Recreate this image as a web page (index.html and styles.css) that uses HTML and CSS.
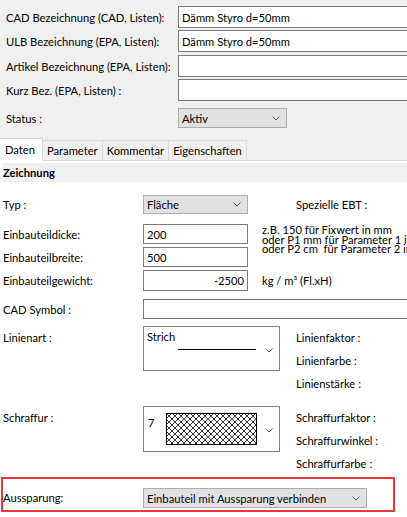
FILE: index.html
```html
<!DOCTYPE html>
<html lang="de">
<head>
<meta charset="utf-8">
<title>Einbauteil</title>
<link rel="stylesheet" href="styles.css">
</head>
<body>
<div class="page">
  <section class="head">
    <div class="hrow"><label>CAD Bezeichnung (CAD, Listen):</label><div class="field">Dämm Styro d=50mm</div></div>
    <div class="hrow"><label>ULB Bezeichnung (EPA, Listen):</label><div class="field">Dämm Styro d=50mm</div></div>
    <div class="hrow gap1"><label>Artikel Bezeichnung (EPA, Listen):</label><div class="field"></div></div>
    <div class="hrow"><label>Kurz Bez. (EPA, Listen) :</label><div class="field"></div></div>
    <div class="hrow status"><label>Status :</label><div class="combo status-combo"><span>Aktiv</span><svg class="chev" width="8" height="5" viewBox="0 0 8 5"><polyline points="0.5,0.5 4,4 7.5,0.5"/></svg></div></div>
  </section>

  <nav class="tabs">
    <div class="tab active">Daten</div>
    <div class="tab">Parameter</div>
    <div class="tab">Kommentar</div>
    <div class="tab">Eigenschaften</div>
  </nav>

  <section class="panel">
    <div class="band">Zeichnung</div>
    <div class="lower">
      <div class="row r-typ">
        <label>Typ :</label>
        <div class="combo"><span>Fläche</span><svg class="chev" width="8" height="5" viewBox="0 0 8 5"><polyline points="0.5,0.5 4,4 7.5,0.5"/></svg></div>
        <span class="right">Spezielle EBT :</span>
      </div>
      <div class="row pair">
        <label class="p-l1">Einbauteildicke:</label>
        <div class="field p-f1">200</div>
        <div class="note">z.B. 150 für Fixwert in mm
oder P1 mm für Parameter 1 in mm
oder P2 cm  für Parameter 2 in cm</div>
        <label class="p-l2">Einbauteilbreite:</label>
        <div class="field p-f2">500</div>
      </div>
      <div class="row r-gew">
        <label>Einbauteilgewicht:</label>
        <div class="field num">-2500</div>
        <span class="unit">kg / m³ (Fl.xH)</span>
      </div>
      <div class="row r-cad">
        <label>CAD Symbol :</label>
        <div class="field wide"></div>
      </div>
      <div class="row r-big r-lin">
        <label>Linienart :</label>
        <div class="bigbox">
          <span class="boxlabel">Strich</span>
          <span class="stroke"></span>
          <svg class="chev" width="8" height="5" viewBox="0 0 8 5"><polyline points="0.5,0.5 4,4 7.5,0.5"/></svg>
        </div>
        <div class="props">
          <span>Linienfaktor :</span>
          <span>Linienfarbe :</span>
          <span>Linienstärke :</span>
        </div>
      </div>
      <div class="row r-big r-sch">
        <label>Schraffur :</label>
        <div class="bigbox hatchbox">
          <span class="boxlabel">7</span>
          <svg class="hatch" width="91" height="32" viewBox="0 0 91 32">
            <defs>
              <pattern id="xh" width="6" height="6" patternUnits="userSpaceOnUse">
                <path d="M0,0 L6,6 M6,0 L0,6" stroke="#000" stroke-width="0.8" fill="none"/>
              </pattern>
            </defs>
            <rect x="0.5" y="0.5" width="90" height="31" fill="url(#xh)" stroke="#000" stroke-width="1"/>
          </svg>
          <svg class="chev" width="8" height="5" viewBox="0 0 8 5"><polyline points="0.5,0.5 4,4 7.5,0.5"/></svg>
        </div>
        <div class="props">
          <span>Schraffurfaktor :</span>
          <span>Schraffurwinkel :</span>
          <span>Schraffurfarbe :</span>
        </div>
      </div>
      <div class="highlight">
        <label>Aussparung:</label>
        <div class="combo auss"><span>Einbauteil mit Aussparung verbinden</span><svg class="chev" width="8" height="5" viewBox="0 0 8 5"><polyline points="0.5,0.5 4,4 7.5,0.5"/></svg></div>
      </div>
    </div>
  </section>
</div>
</body>
</html>
```

FILE: styles.css
```css
* { box-sizing: border-box; }
html, body {
  margin: 0;
  padding: 0;
}
body {
  width: 407px;
  height: 517px;
  overflow: hidden;
  background: #f0f0f0;
  font-family: Lato, "Noto Sans", sans-serif;
  font-size: 11.2px;
  color: #000;
}
.page {
  width: 407px;
  height: 517px;
  overflow: hidden;
}
label { white-space: nowrap; }

/* header fields */
.head {
  display: flex;
  flex-direction: column;
  gap: 2px;
  padding: 6px 0 0 6px;
}
.hrow {
  display: grid;
  grid-template-columns: 172px 260px;
  align-items: center;
  height: 22px;
}
.hrow.gap1 { margin-top: 1px; }
.hrow.status { margin-top: 5px; height: 20px; }
.field {
  background: #fff;
  border: 1px solid #7a7a7a;
  height: 100%;
  padding: 0 3px;
  display: flex;
  align-items: center;
  white-space: nowrap;
}
.combo {
  background: #e1e1e1;
  border: 1px solid #adadad;
  height: 100%;
  display: flex;
  align-items: center;
  justify-content: space-between;
  padding: 0 6px 0 3px;
  white-space: nowrap;
}
.status-combo { width: 109px; }
.chev polyline {
  fill: none;
  stroke: #5a5a5a;
  stroke-width: 1;
}

/* tabs */
.tabs {
  display: flex;
  align-items: flex-end;
  margin-top: 10px;
  height: 23px;
  border-bottom: 1px solid #d9d9d9;
}
.tab {
  height: 20px;
  padding: 0 4px;
  display: flex;
  align-items: center;
  border: 1px solid #d9d9d9;
  border-bottom: none;
  margin-left: -1px;
  background: #f0f0f0;
}
.tab.active {
  margin-left: 0;
  background: #fff;
  width: 43px;
  position: relative;
  z-index: 1;
  margin-bottom: -1px;
  height: 23px;
  border-left: none;
  padding: 0 0 2px 5px;
}

/* panel */
.panel {
  background: #fff;
  padding-top: 2px;
  height: 400px;
}
.band {
  margin-left: 3px;
  height: 19px;
  background: #f0f0f0;
  font-weight: bold;
  display: flex;
  align-items: center;
}
.lower {
  padding: 13px 0 0 3px;
  display: flex;
  flex-direction: column;
}
.row {
  display: grid;
  grid-template-columns: 140px 105px 14px 34px 200px;
  align-items: center;
}
.r-typ { height: 19px; }
.r-typ .right { grid-column: 5; }
.pair {
  margin-top: 10px;
  grid-template-rows: 20px 20px;
  row-gap: 3px;
}
.p-l1 { grid-row: 1; grid-column: 1; }
.p-f1 { grid-row: 1; grid-column: 2; }
.p-l2 { grid-row: 2; grid-column: 1; }
.p-f2 { grid-row: 2; grid-column: 2; }
.pair .note {
  grid-column: 4 / 6;
  grid-row: 1 / 3;
  align-self: start;
  white-space: pre;
  line-height: 9.5px;
  padding-top: 1px;
  overflow: hidden;
}
.r-gew { margin-top: 3px; height: 21px; }
.num { justify-content: flex-end; }
.unit { grid-column: 4 / 6; white-space: nowrap; }
.r-cad { margin-top: 8px; height: 20px; }
.field.wide { grid-column: 2 / 6; width: 300px; }
.r-big {
  align-items: start;
}
.r-lin { margin-top: 7px; }
.r-sch { margin-top: 11px; }
.r-big label { line-height: 23px; }
.bigbox {
  grid-column: 2 / 5;
  width: 137px;
  height: 45px;
  background: #fff;
  border: 1px solid #828282;
  position: relative;
}
.hatchbox { height: 46px; }
.boxlabel {
  position: absolute;
  left: 3px;
  top: 3px;
}
.hatchbox .boxlabel { left: 4px; top: 9px; }
.stroke {
  position: absolute;
  left: 34px;
  top: 22px;
  width: 78px;
  height: 1px;
  background: #000;
}
.hatch {
  position: absolute;
  left: 22px;
  top: 6px;
}
.bigbox .chev {
  position: absolute;
  right: 6px;
  top: 21px;
}
.props {
  grid-column: 5;
  display: flex;
  flex-direction: column;
  white-space: nowrap;
}
.props span { line-height: 23px; }

.highlight {
  margin-top: 2px;
  margin-left: -2px;
  width: 394px;
  height: 35px;
  border: 2px solid #e8383d;
  display: grid;
  grid-template-columns: 140px 224px;
  align-items: end;
  padding-bottom: 2px;
}
.highlight label { align-self: center; padding-top: 7px; }
.auss { height: 20px; }
```
